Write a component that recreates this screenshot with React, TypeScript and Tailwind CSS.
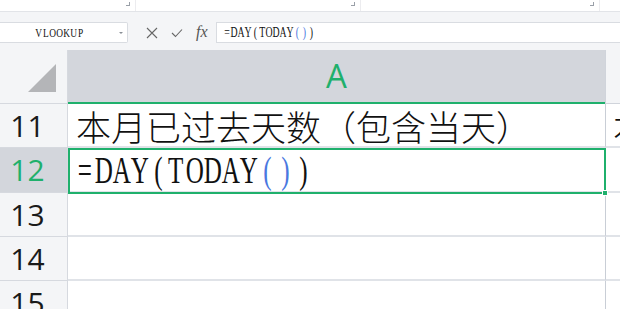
import React from 'react';

// half-width serif chars, one fixed-width box each (like SimSun in the sheet)
function Chars({ text, w, size, scale, blue = [] }: { text: string; w: string; size: string; scale: string; blue?: number[] }) {
  return (
    <span className="inline-flex font-['Liberation_Serif',serif]">
      {text.split('').map((c, i) => (
        <span key={i} className={`inline-flex justify-center ${w} ${size}`}>
          <span className={`inline-block ${scale} ${blue.includes(i) ? 'text-[#4a78e0]' : 'text-[#111]'}`}>{c}</span>
        </span>
      ))}
    </span>
  );
}

function CornerMark() {
  return <span className="block w-[4px] h-[4px] border-r border-b border-[#9aa0a8]" />;
}

export default function App() {
  const rows = [
    { n: 11, text: '本月已过去天数（包含当天）', next: '本' },
    { n: 12, formula: true },
    { n: 13 },
    { n: 14 },
    { n: 15 },
  ];

  return (
    <div className="w-[620px] h-[309px] overflow-hidden bg-[#f4f5f7] relative font-['Open_Sans',sans-serif]">
      {/* top strip */}
      <div className="h-[12px] bg-white border-b border-[#e2e4e8] flex items-start">
        <div className="w-[136px] h-[11px] flex justify-end items-start pt-[2px] pr-[5px] border-r border-[#ececef]">
          <CornerMark />
        </div>
        <div className="w-[225px] h-[11px] flex justify-end items-start pt-[2px] pr-[5px] border-r border-[#ececef]">
          <CornerMark />
        </div>
        <div className="w-[239px] h-[11px] flex justify-end items-start pt-[2px] pr-[5px] border-r border-[#ececef]">
          <CornerMark />
        </div>
      </div>

      {/* formula bar */}
      <div className="h-[38px] flex items-start pt-[10px]">
        <div className="w-[128px] h-[21px] bg-white border border-[#d9dce1] border-l-0 rounded-r-[2px] flex items-center">
          <div className="flex-1 flex justify-center pl-[2px]">
            <Chars text="VLOOKUP" w="w-[7px]" size="text-[13px]" scale="scale-x-[0.72]" />
          </div>
          <svg width="8" height="6" viewBox="0 0 8 6" className="mr-[2px]">
            <path d="M2 2 L6 2 L4 4 Z" fill="#8a8f96" />
          </svg>
        </div>
        <div className="h-[21px] flex items-center ml-[18px] gap-[13px]">
          <svg width="12" height="12" viewBox="0 0 12 12">
            <path d="M1 1 L11 11 M11 1 L1 11" stroke="#666" strokeWidth="1.1" />
          </svg>
          <svg width="12" height="10" viewBox="0 0 12 10">
            <path d="M1 5 L4.5 8.5 L11 1.5" stroke="#666" strokeWidth="1.1" fill="none" />
          </svg>
          <span className="italic text-[16px] leading-none text-[#555] font-['Liberation_Serif',serif] -mt-[2px]">fx</span>
        </div>
        <div className="ml-[8px] flex-1 h-[21px] bg-white border border-[#d9dce1] border-r-0 flex items-center pl-[7px]">
          <Chars text="=DAY(TODAY())" w="w-[7px]" size="text-[14px]" scale="scale-x-[0.7]" blue={[10, 11]} />
        </div>
      </div>

      {/* sheet */}
      <div className="grid grid-cols-[68px_537px_1fr]">
        {/* header */}
        <div className="h-[54px] border-b border-r border-[#d6d9df] flex items-end pb-[11px] pl-[28px]">
          <svg width="28" height="28" viewBox="0 0 28 28">
            <path d="M0 28 L28 0 L28 28 Z" fill="#b4b5b8" />
          </svg>
        </div>
        <div className="h-[54px] bg-[#d3d6dc] border-b-2 border-[#1fb06c] flex items-center justify-center">
          <span className="text-[33px] leading-none text-[#1fb06c] pb-[2px]">A</span>
        </div>
        <div className="h-[54px] border-b border-l border-[#d0d4db]" />

        {rows.map((r) => (
          <React.Fragment key={r.n}>
            <div
              className={`h-[44px] border-r border-b border-[#d6d9df] flex items-center justify-center pr-[12px] ${r.formula ? 'bg-[#d3d6dc] h-[45px]' : 'bg-[#f4f5f7]'}`}
            >
              <span className={`text-[30px] leading-none ${r.formula ? 'text-[#1fb06c]' : 'text-[#1a1a1a]'}`}>{r.n}</span>
            </div>
            <div className={`h-[44px] bg-white border-b-2 border-[#e0e3e8] flex items-center pl-[8px] whitespace-nowrap ${r.formula ? 'h-[45px]' : ''}`}>
              {r.text && (
                <span className="text-[35px] leading-none text-[#111] font-['Noto_Sans_CJK_SC',sans-serif] font-light">{r.text}</span>
              )}
              {r.formula && (
                <Chars text="=DAY(TODAY())" w="w-[18.2px]" size="text-[38px] leading-none" scale="scale-x-[0.66]" blue={[10, 11]} />
              )}
            </div>
            <div className={`h-[44px] bg-white border-b-2 border-l border-[#e0e3e8] border-l-[#c9ced6] flex items-center pl-[7px] overflow-hidden whitespace-nowrap ${r.formula ? 'h-[45px]' : ''}`}>
              {r.next && (
                <span className="text-[35px] leading-none text-[#111] font-['Noto_Sans_CJK_SC',sans-serif] font-light">{r.next}</span>
              )}
            </div>
          </React.Fragment>
        ))}
      </div>

      {/* active cell selection */}
      <div className="absolute left-[68px] top-[148px] w-[538px] h-[46px] border-2 border-[#1fb06c] pointer-events-none">
        <span className="absolute -right-[4px] -bottom-[4px] w-[6px] h-[6px] bg-[#1fb06c] border border-white" />
      </div>
    </div>
  );
}
